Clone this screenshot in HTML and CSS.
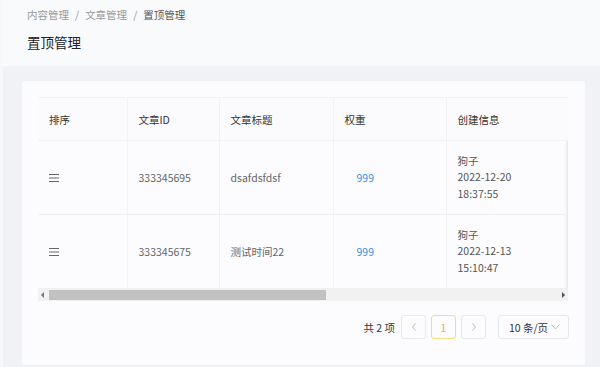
FILE: index.html
```html
<!DOCTYPE html>
<html lang="zh-CN">
<head>
    <meta charset="UTF-8">
    <title>置顶管理</title>
    <link rel="stylesheet" href="styles.css">
</head>
<body>
    <div class="page-header">
        <div class="breadcrumb">
            <span>内容管理</span><span class="sep">/</span><span>文章管理</span><span class="sep">/</span><span class="current">置顶管理</span>
        </div>
        <h1 class="page-title">置顶管理</h1>
    </div>

    <div class="content">
        <div class="card">
            <div class="table-wrap">
                <table class="top-table">
                    <colgroup>
                        <col style="width: 89px">
                        <col style="width: 92px">
                        <col style="width: 114px">
                        <col style="width: 113px">
                        <col style="width: 150px">
                        <col style="width: 120px">
                    </colgroup>
                    <thead>
                        <tr>
                            <th>排序</th>
                            <th>文章ID</th>
                            <th>文章标题</th>
                            <th>权重</th>
                            <th>创建信息</th>
                            <th></th>
                        </tr>
                    </thead>
                    <tbody>
                        <tr>
                            <td><svg class="drag" width="10" height="8" viewBox="0 0 10 8"><path d="M0 0.5h10M0 4h10M0 7.5h10" stroke="#666" stroke-width="1"/></svg></td>
                            <td>333345695</td>
                            <td>dsafdsfdsf</td>
                            <td><span class="weight">999</span></td>
                            <td class="info">狗子<br>2022-12-20<br>18:37:55</td>
                            <td></td>
                        </tr>
                        <tr>
                            <td><svg class="drag" width="10" height="8" viewBox="0 0 10 8"><path d="M0 0.5h10M0 4h10M0 7.5h10" stroke="#666" stroke-width="1"/></svg></td>
                            <td>333345675</td>
                            <td>测试时间22</td>
                            <td><span class="weight">999</span></td>
                            <td class="info">狗子<br>2022-12-13<br>15:10:47</td>
                            <td></td>
                        </tr>
                    </tbody>
                </table>
                <div class="fake-scroll">
                    <span class="arrow left"></span>
                    <span class="thumb"></span>
                    <span class="arrow right"></span>
                </div>
            </div>

            <div class="pager">
                <span class="total">共 2 项</span>
                <button class="page-btn">
                    <svg width="8" height="8" viewBox="0 0 8 8"><path d="M5.5 0.5L2.5 4l3 3.5" fill="none" stroke="#bbb" stroke-width="1"/></svg>
                </button>
                <button class="page-btn active">1</button>
                <button class="page-btn">
                    <svg width="8" height="8" viewBox="0 0 8 8"><path d="M2.5 0.5L5.5 4l-3 3.5" fill="none" stroke="#bbb" stroke-width="1"/></svg>
                </button>
                <div class="size-select">
                    <span>10 条/页</span>
                    <svg width="9" height="6" viewBox="0 0 9 6"><path d="M0.5 0.5L4.5 5l4-4.5" fill="none" stroke="#bbb" stroke-width="1"/></svg>
                </div>
            </div>
        </div>
    </div>
</body>
</html>
```

FILE: styles.css
```css
html, body {
    margin: 0;
    height: 100%;
}
body {
    font-family: "Noto Sans CJK SC", "Noto Sans", sans-serif;
    background: #f0f2f6;
    color: #333;
    border-left: 3px solid #f7f8fb;
    box-sizing: border-box;
}
.page-header {
    background: #f9fafc;
    height: 66px;
    padding: 7px 24px 0;
    box-sizing: border-box;
}
.breadcrumb {
    font-size: 10.5px;
    line-height: 16px;
    color: #999;
}
.breadcrumb .sep {
    margin: 0 6px;
}
.breadcrumb .current {
    color: #555;
}
.page-title {
    margin: 10px 0 0;
    font-size: 13.5px;
    font-weight: 400;
    line-height: 18px;
    color: #222;
}
.content {
    padding: 15px 15px 2px 19px;
}
.card {
    background: #fcfcfe;
    border-radius: 2px;
    padding: 16px 16px 25px;
    height: 284px;
    box-sizing: border-box;
}
.table-wrap {
    width: 530px;
    overflow: hidden;
    position: relative;
    box-shadow: inset -3px 0 3px -2px rgba(0, 0, 0, 0.12);
}
.top-table {
    table-layout: fixed;
    border-collapse: collapse;
    width: 678px;
    font-size: 10.5px;
}
.top-table th {
    height: 43px;
    padding: 0 11px;
    text-align: left;
    font-weight: 400;
    color: #333;
    background: #fbfbfd;
    border-top: 1px solid #f2f2f5;
    border-bottom: 1px solid #f2f2f5;
    border-right: 1px solid #f2f2f5;
    box-sizing: border-box;
}
.top-table td {
    height: 74px;
    padding: 0 11px;
    color: #666;
    border-bottom: 1px solid #f0f0f3;
    border-right: 1px solid #f2f2f5;
    box-sizing: border-box;
}
.top-table td.info {
    line-height: 16.5px;
    color: #555;
}
.drag {
    display: block;
}
.weight {
    color: #3d8fe4;
    margin-left: 12px;
}
.fake-scroll {
    height: 12px;
    background: #f1f1f1;
    display: flex;
    align-items: center;
}
.thumb {
    height: 10px;
    width: 277px;
    background: #c1c1c1;
}
.arrow {
    width: 11px;
    height: 12px;
    position: relative;
}
.arrow.left::after,
.arrow.right::after {
    content: "";
    position: absolute;
    top: 3px;
    border-top: 3px solid transparent;
    border-bottom: 3px solid transparent;
}
.arrow.left::after {
    left: 3px;
    border-right: 3px solid #777;
}
.arrow.right {
    margin-left: auto;
}
.arrow.right::after {
    left: 5px;
    border-left: 3px solid #505050;
}
.pager {
    display: flex;
    justify-content: flex-end;
    align-items: center;
    margin-top: 14px;
    font-size: 10.5px;
}
.total {
    margin-right: 6px;
    color: #333;
}
.page-btn {
    width: 25px;
    height: 24px;
    margin-right: 5px;
    padding: 0;
    border: 1px solid #e8e8ea;
    border-radius: 3px;
    background: #fcfcfe;
    font-family: inherit;
    font-size: 10.5px;
    color: #333;
    display: flex;
    align-items: center;
    justify-content: center;
}
.page-btn.active {
    border-color: #f3dc84;
    color: #e0b532;
}
.size-select {
    margin-left: 7px;
    width: 71px;
    height: 24px;
    box-sizing: border-box;
    border: 1px solid #e8e8ea;
    border-radius: 3px;
    display: flex;
    align-items: center;
    justify-content: space-between;
    padding: 0 8px 0 10px;
    color: #333;
}
```
